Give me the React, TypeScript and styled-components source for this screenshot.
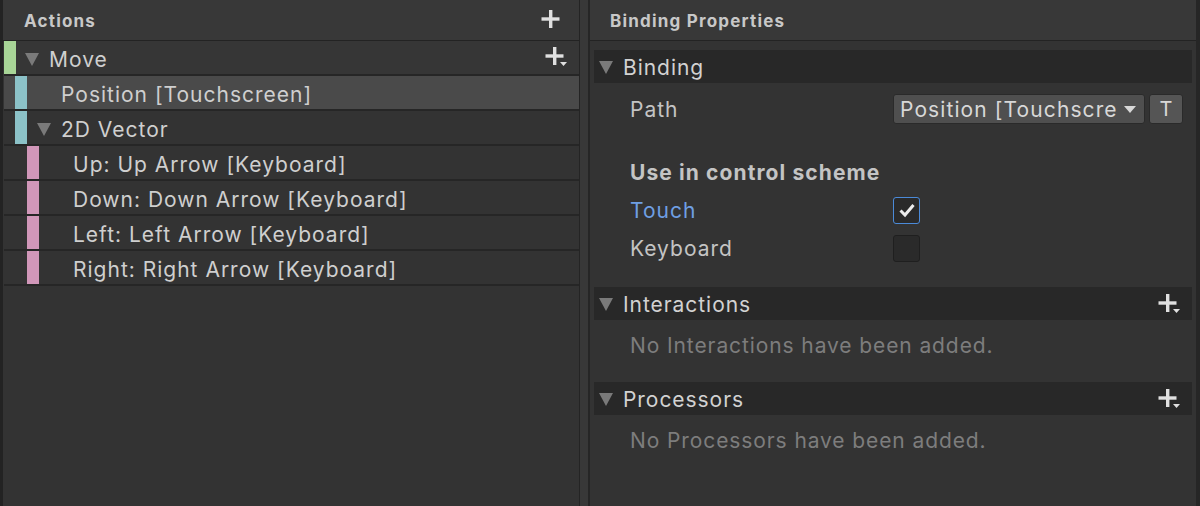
import React from 'react';
import styled, { createGlobalStyle } from 'styled-components';

const GlobalStyle = createGlobalStyle`
  html, body {
    margin: 0;
    padding: 0;
    background: #232323;
    font-family: Inter, "Noto Sans", sans-serif;
    color: #c4c4c4;
  }
`;

const Window = styled.div`
  display: flex;
  width: 1200px;
  height: 506px;
  background: #232323;
  overflow: hidden;
`;

const LeftPanel = styled.div`
  width: 576px;
  margin-left: 3px;
  display: flex;
  flex-direction: column;
  background: #333333;
  border-right: 1px solid #242424;
`;

const Splitter = styled.div`
  width: 8px;
  background: #383838;
  border-right: 2px solid #262626;
`;

const RightPanel = styled.div`
  flex: 1;
  display: flex;
  flex-direction: column;
  background: #333333;
  border-right: 4px solid #262626;
`;

const PanelHeader = styled.div<{ $pad: number }>`
  height: 41px;
  display: flex;
  align-items: center;
  justify-content: space-between;
  padding: 1px 14px 0 ${p => p.$pad}px;
  box-sizing: border-box;
  background: #383838;
  border-bottom: 1px solid #232323;
  font-weight: 700;
  font-size: 17px;
  letter-spacing: 1.2px;
  color: #c8c8c8;
  flex-shrink: 0;
`;

const Tree = styled.div`
  display: flex;
  flex-direction: column;
  margin-left: 1px;
`;

const TreeRow = styled.div<{ $selected?: boolean; $top?: boolean }>`
  height: 33px;
  display: flex;
  align-items: stretch;
  background: ${p => (p.$selected ? '#4a4a4a' : p.$top ? '#363636' : '#333333')};
  border-bottom: 2px solid #262626;
  font-size: 21px;
  letter-spacing: 1px;
  color: #cfcfcf;
`;

const ColorBar = styled.div<{ $color: string; $indent: number }>`
  width: 12px;
  margin-left: ${p => p.$indent}px;
  background: ${p => p.$color};
  flex-shrink: 0;
`;

const RowLabel = styled.div<{ $pad: number }>`
  display: flex;
  align-items: center;
  padding: 3px 0 0 ${p => p.$pad}px;
  flex: 1;
  white-space: nowrap;
`;

const Triangle = styled.span<{ $color?: string }>`
  display: inline-block;
  width: 0;
  height: 0;
  border-left: 7px solid transparent;
  border-right: 7px solid transparent;
  border-top: 13px solid ${p => p.$color || '#7a7a7a'};
  margin-right: 10px;
`;

const PlusWrap = styled.div`
  display: flex;
  align-items: center;
  padding-right: 10px;
`;

const Plus: React.FC<{ drop?: boolean }> = ({ drop }) => (
  <svg width="24" height="24" viewBox="0 0 24 24">
    <rect x="8" y="1" width="3.4" height="18" fill="#e0e0e0" />
    <rect x="0.5" y="8.3" width="18" height="3.4" fill="#e0e0e0" />
    {drop && <polygon points="15,16 22,16 18.5,20" fill="#e0e0e0" />}
  </svg>
);

const Body = styled.div`
  display: flex;
  flex-direction: column;
  padding: 9px 4px 0 4px;
`;

const FoldHeader = styled.div`
  height: 33px;
  display: flex;
  align-items: center;
  justify-content: space-between;
  padding: 2px 0 0 5px;
  box-sizing: border-box;
  background: #282828;
  font-size: 21px;
  letter-spacing: 0.95px;
  color: #d2d2d2;
`;

const FoldTitle = styled.div`
  display: flex;
  align-items: center;
`;

const FoldContent = styled.div`
  display: flex;
  flex-direction: column;
  padding: 10px 0 0 36px;
`;

const PropRow = styled.div<{ $h: number }>`
  height: ${p => p.$h}px;
  display: flex;
  align-items: center;
  font-size: 21px;
`;

const PropLabel = styled.div<{ $w: number; $color?: string; $bold?: boolean }>`
  width: ${p => p.$w}px;
  color: ${p => p.$color || '#c4c4c4'};
  font-weight: ${p => (p.$bold ? 700 : 400)};
  letter-spacing: ${p => (p.$bold ? '1.1px' : '1px')};
  white-space: nowrap;
`;

const Dropdown = styled.div`
  width: 252px;
  height: 30px;
  box-sizing: border-box;
  display: flex;
  align-items: center;
  justify-content: space-between;
  padding: 0 8px 0 6px;
  background: #4f4f4f;
  border: 1px solid #2a2a2a;
  border-radius: 3px;
  font-size: 21px;
  letter-spacing: 1.1px;
  color: #d8d8d8;
  white-space: nowrap;
`;

const DropArrow = styled.span`
  flex-shrink: 0;
  border-left: 6px solid transparent;
  border-right: 6px solid transparent;
  border-top: 7px solid #d8d8d8;
  margin-left: 2px;
`;

const SmallButton = styled.div`
  width: 34px;
  height: 30px;
  margin-left: 4px;
  box-sizing: border-box;
  display: flex;
  align-items: center;
  justify-content: center;
  background: #555555;
  border: 1px solid #2a2a2a;
  border-radius: 3px;
  font-size: 20px;
  color: #d8d8d8;
`;

const Checkbox = styled.div<{ $checked?: boolean }>`
  width: 27px;
  height: 27px;
  box-sizing: border-box;
  display: flex;
  align-items: center;
  justify-content: center;
  background: #2a2a2a;
  border: 1px solid ${p => (p.$checked ? '#4b8ad8' : '#1f1f1f')};
  border-radius: 3px;
`;

const EmptyNote = styled.div`
  height: 48px;
  display: flex;
  align-items: center;
  padding: 2px 0 0 36px;
  box-sizing: border-box;
  font-size: 21px;
  letter-spacing: 0.9px;
  color: #7d7d7d;
  margin-bottom: 14px;
`;

const keyboardRows = [
  'Up: Up Arrow [Keyboard]',
  'Down: Down Arrow [Keyboard]',
  'Left: Left Arrow [Keyboard]',
  'Right: Right Arrow [Keyboard]',
];

const App: React.FC = () => {
  return (
    <Window>
      <GlobalStyle />
      <LeftPanel>
        <PanelHeader $pad={21}>
          Actions
          <Plus />
        </PanelHeader>
        <Tree>
          <TreeRow $top>
            <ColorBar $color="#a8d597" $indent={0} />
            <RowLabel $pad={9}>
              <Triangle />
              Move
            </RowLabel>
            <PlusWrap>
              <Plus drop />
            </PlusWrap>
          </TreeRow>
          <TreeRow $selected>
            <ColorBar $color="#8cc2c8" $indent={11} />
            <RowLabel $pad={34}>Position [Touchscreen]</RowLabel>
          </TreeRow>
          <TreeRow>
            <ColorBar $color="#8cc2c8" $indent={11} />
            <RowLabel $pad={10}>
              <Triangle />
              2D Vector
            </RowLabel>
          </TreeRow>
          {keyboardRows.map(r => (
            <TreeRow key={r}>
              <ColorBar $color="#d197b9" $indent={23} />
              <RowLabel $pad={34}>{r}</RowLabel>
            </TreeRow>
          ))}
        </Tree>
      </LeftPanel>
      <Splitter />
      <RightPanel>
        <PanelHeader $pad={20}>Binding Properties</PanelHeader>
        <Body>
          <FoldHeader>
            <FoldTitle>
              <Triangle />
              Binding
            </FoldTitle>
          </FoldHeader>
          <FoldContent>
            <PropRow $h={32}>
              <PropLabel $w={263}>Path</PropLabel>
              <Dropdown>
                Position [Touchscre
                <DropArrow />
              </Dropdown>
              <SmallButton>T</SmallButton>
            </PropRow>
            <PropRow $h={38} style={{ marginTop: 28 }}>
              <PropLabel $w={263} $bold>Use in control scheme</PropLabel>
            </PropRow>
            <PropRow $h={38}>
              <PropLabel $w={263} $color="#6f9fe3">Touch</PropLabel>
              <Checkbox $checked>
                <svg width="20" height="20" viewBox="0 0 20 20">
                  <path d="M3.5 10.5 L8 15 L16.5 5" stroke="#ececec" strokeWidth="3" fill="none" />
                </svg>
              </Checkbox>
            </PropRow>
            <PropRow $h={38}>
              <PropLabel $w={263}>Keyboard</PropLabel>
              <Checkbox />
            </PropRow>
          </FoldContent>
          <FoldHeader style={{ marginTop: 20 }}>
            <FoldTitle>
              <Triangle />
              Interactions
            </FoldTitle>
            <PlusWrap>
              <Plus drop />
            </PlusWrap>
          </FoldHeader>
          <EmptyNote>No Interactions have been added.</EmptyNote>
          <FoldHeader>
            <FoldTitle>
              <Triangle />
              Processors
            </FoldTitle>
            <PlusWrap>
              <Plus drop />
            </PlusWrap>
          </FoldHeader>
          <EmptyNote>No Processors have been added.</EmptyNote>
        </Body>
      </RightPanel>
    </Window>
  );
};

export default App;
